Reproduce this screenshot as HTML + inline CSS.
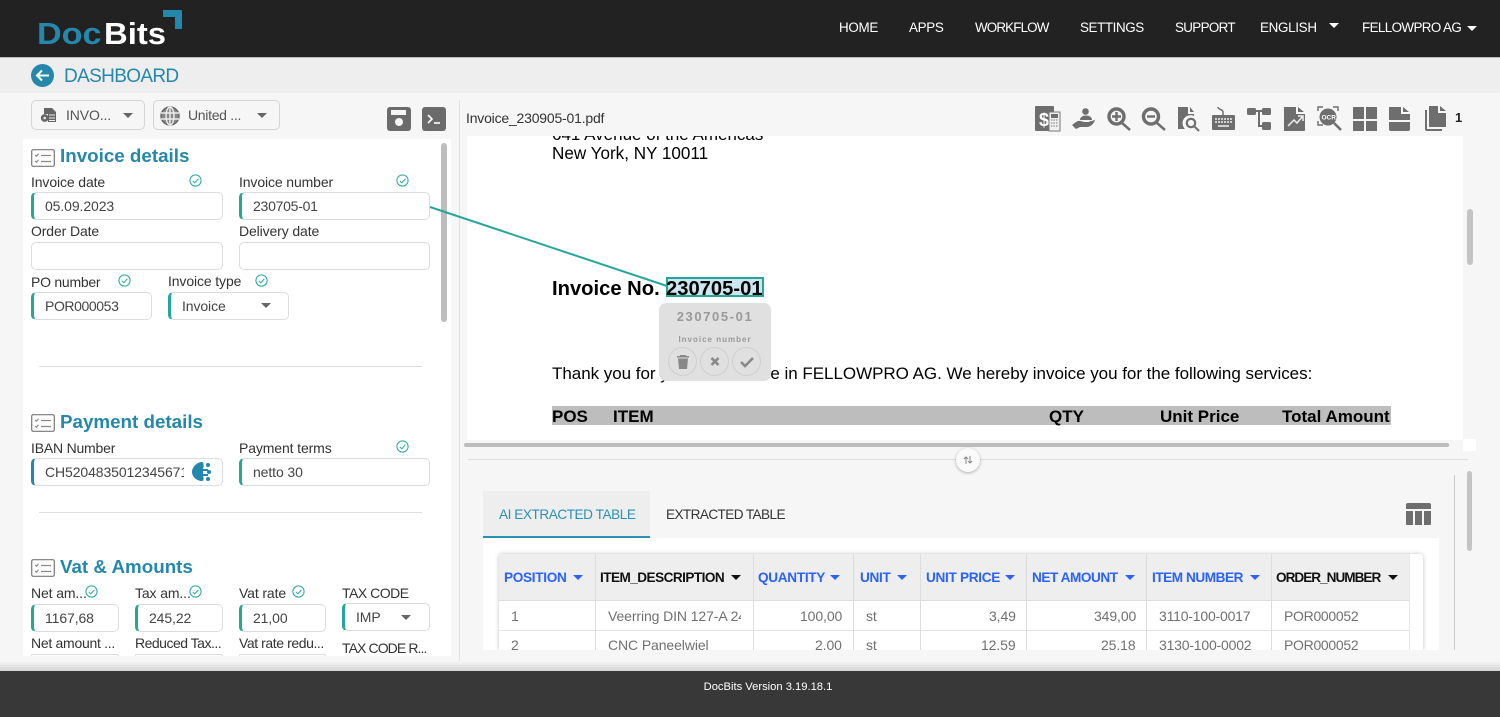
<!DOCTYPE html>
<html lang="en"><head><meta charset="utf-8"><title>DocBits</title>
<style>
*{box-sizing:border-box}
html,body{margin:0;padding:0;width:1500px;height:717px;overflow:hidden;background:#f6f6f6;font-family:"Liberation Sans",sans-serif;color:#333}
.a{position:absolute}
.t{position:absolute;white-space:nowrap;line-height:16px;font-size:14px;letter-spacing:-.12px}
.nav{color:#fff;font-size:13.4px;letter-spacing:-.3px;top:20px}
.lb{color:#333}
.in{position:absolute;background:#fff;border:1px solid #dcdcdc;border-left:3px solid #26a69a;border-radius:5px;height:28px;font-size:14px;line-height:26px;padding-left:11px;color:#444;white-space:nowrap;overflow:hidden;letter-spacing:-.1px}
.h{position:absolute;font-size:18.8px;font-weight:bold;color:#2488ad;line-height:24px;white-space:nowrap}
.hr{position:absolute;height:1px;background:#ddd}
.car{position:absolute;width:0;height:0;border-left:5px solid transparent;border-right:5px solid transparent;border-top:5px solid #666}
.doc{position:absolute;white-space:nowrap;color:#000;line-height:20px}
.th{position:absolute;top:570px;font-size:13.6px;font-weight:bold;letter-spacing:-.3px;line-height:16px;white-space:nowrap;color:#2962ff}
.td{position:absolute;font-size:14px;line-height:16px;color:#707070;white-space:nowrap;letter-spacing:-.1px}
.vl{position:absolute;top:554px;width:1px;height:96px;background:#ddd}
.cb{position:absolute;top:347px;width:29px;height:29px;border:1px solid #cfcfcf;border-radius:50%}
</style></head><body>

<header class="a" style="left:0;top:0;width:1500px;height:57px;background:#222"></header>
<div class="a" style="left:0;top:57px;width:1500px;height:1px;background:#bbb"></div>
<div class="a" style="left:0;top:58px;width:1500px;height:35px;background:#eee"></div>

<div class="a" style="left:37px;top:16px;font-size:31px;font-weight:bold;line-height:36px;color:#2488ad;white-space:nowrap;transform-origin:0 0;transform:scaleX(1.100)">Doc</div>
<div class="a" style="left:104px;top:16px;font-size:31px;font-weight:bold;line-height:36px;color:#fff;white-space:nowrap;transform-origin:0 0;transform:scaleX(1.060)">Bits</div>
<svg class="a" style="left:160px;top:8px" width="24" height="26"><path d="M3 2H21a1 1 0 0 1 1 1V21H15V9H3Z" fill="#2488ad"/></svg>

<span class="t nav" style="left:839px">HOME</span>
<span class="t nav" style="left:909px">APPS</span>
<span class="t nav" style="left:975px;letter-spacing:-.85px">WORKFLOW</span>
<span class="t nav" style="left:1080px;letter-spacing:-.4px">SETTINGS</span>
<span class="t nav" style="left:1175px;letter-spacing:-.65px">SUPPORT</span>
<span class="t nav" style="left:1260px">ENGLISH</span>
<span class="t nav" style="left:1362px;letter-spacing:-.6px">FELLOWPRO AG</span>
<div class="car" style="left:1329px;top:23px;border-top-color:#fff"></div>
<div class="car" style="left:1467px;top:26px;border-top-color:#fff"></div>

<svg class="a" style="left:31px;top:64px" width="23" height="23"><circle cx="11.5" cy="11.5" r="11.5" fill="#2488ad"/><path d="M18 11.5H6M11 6.5L6 11.5L11 16.5" fill="none" stroke="#fff" stroke-width="2"/></svg>
<span class="t" style="left:64px;top:67px;font-size:19px;line-height:20px;color:#2488ad;letter-spacing:-.65px">DASHBOARD</span>

<!-- selects -->
<div class="a" style="left:31px;top:100px;width:114px;height:30px;border:1px solid #d5d5d5;border-radius:5px"></div>
<div class="a" style="left:153px;top:100px;width:127px;height:30px;border:1px solid #d5d5d5;border-radius:5px"></div>
<svg class="a" style="left:40px;top:106px" width="18" height="20" fill="#666"><path d="M4 2H12L16 6V16H8V8H4Z"/><path d="M9 9h6M9 12h6M9 14.500h6" stroke="#eee" stroke-width="1"/><circle cx="4.700" cy="12" r="3.900"/><circle cx="4.700" cy="12" r="1.300" fill="#eee"/></svg>
<span class="t" style="left:66px;top:107px;color:#555">INVO...</span>
<div class="car" style="left:123px;top:113px"></div>
<svg class="a" style="left:160px;top:106px" width="20" height="20" fill="none" stroke="#666" stroke-width="1.4"><circle cx="10" cy="10" r="9" fill="#888"/><ellipse cx="10" cy="10" rx="4" ry="9" stroke="#eee"/><path d="M1 7H19M1 13H19M10 1V19" stroke="#eee"/></svg>
<span class="t" style="left:188px;top:107px;color:#555;letter-spacing:-.3px">United ...</span>
<div class="car" style="left:257px;top:113px"></div>
<svg class="a" style="left:387px;top:106px" width="24" height="25"><rect y="1" width="24" height="24" rx="3" fill="#6b6b6b"/><rect x="4" y="4" width="15" height="5" fill="#f6f6f6"/><circle cx="12" cy="16" r="4" fill="#f6f6f6"/></svg>
<svg class="a" style="left:422px;top:106px" width="24" height="25"><rect y="1" width="24" height="24" rx="3" fill="#6b6b6b"/><path d="M6 9l4 4-4 4" fill="none" stroke="#fff" stroke-width="1.6"/><path d="M12 17h6" stroke="#fff" stroke-width="1.6"/></svg>

<!-- left card -->
<section class="a" style="left:23px;top:139px;width:428px;height:517px;background:#fff;overflow:hidden">
<div class="a" style="left:418px;top:4px;width:6px;height:179px;background:#bdbdbd;border-radius:3px"></div>
</section>
<div class="a" style="left:459px;top:100px;width:1px;height:570px;background:#e2e2e2"></div>

<svg width="0" height="0" style="position:absolute"><defs>
<symbol id="chk" viewBox="0 0 13 13"><circle cx="6.5" cy="6.5" r="5.6" fill="none" stroke="#26a69a" stroke-width="1"/><path d="M3.8 6.8l2 2 3.6-4" fill="none" stroke="#26a69a" stroke-width="1"/></symbol>
<symbol id="lst" viewBox="0 0 24 18"><rect x=".7" y=".7" width="22.6" height="16.6" rx="1.5" fill="none" stroke="#777" stroke-width="1.2"/><path d="M4 6l1.500 1.200 2-2.400M4 12l1.500 1.200 2-2.400M10 6.500h10M10 12.500h10" fill="none" stroke="#888" stroke-width="1.200"/></symbol>
</defs></svg>

<svg class="a" style="left:31px;top:149px" width="24" height="18"><use href="#lst"/></svg>
<div class="h" style="left:60px;top:144px">Invoice details</div>
<span class="t lb" style="left:31px;top:174px">Invoice date</span>
<svg class="a" style="left:189px;top:174px" width="13" height="13"><use href="#chk"/></svg>
<span class="t lb" style="left:239px;top:174px">Invoice number</span>
<svg class="a" style="left:396px;top:174px" width="13" height="13"><use href="#chk"/></svg>
<div class="in" style="left:31px;top:192px;width:192px">05.09.2023</div>
<div class="in" style="left:239px;top:192px;width:191px;letter-spacing:-.25px">230705-01</div>
<span class="t lb" style="left:31px;top:223px">Order Date</span>
<span class="t lb" style="left:239px;top:223px">Delivery date</span>
<div class="in" style="left:31px;top:242px;width:192px;border-left:1px solid #dcdcdc"></div>
<div class="in" style="left:239px;top:242px;width:191px;border-left:1px solid #dcdcdc"></div>
<span class="t lb" style="left:31px;top:274px;letter-spacing:-.25px">PO number</span>
<svg class="a" style="left:118px;top:274px" width="13" height="13"><use href="#chk"/></svg>
<span class="t lb" style="left:168px;top:273px">Invoice type</span>
<svg class="a" style="left:255px;top:274px" width="13" height="13"><use href="#chk"/></svg>
<div class="in" style="left:31px;top:292px;width:121px;letter-spacing:-.4px">POR000053</div>
<div class="in" style="left:168px;top:292px;width:121px">Invoice</div>
<div class="car" style="left:261px;top:303px"></div>
<div class="hr" style="left:39px;top:366px;width:383px"></div>

<svg class="a" style="left:31px;top:414px" width="24" height="18"><use href="#lst"/></svg>
<div class="h" style="left:60px;top:410px">Payment details</div>
<span class="t lb" style="left:31px;top:440px;letter-spacing:-.2px">IBAN Number</span>
<span class="t lb" style="left:239px;top:440px">Payment terms</span>
<svg class="a" style="left:396px;top:440px" width="13" height="13"><use href="#chk"/></svg>
<div class="in" style="left:31px;top:458px;width:192px;border-left-color:#2488ad"><span style="display:inline-block;width:139px;overflow:hidden">CH5204835012345671</span></div>
<svg class="a" style="left:191px;top:460px" width="21" height="23"><path d="M11 2C6 2 1 7 1 12s5 9 10 9c2 0 2-3 1-5h5v-2h-5v-3h5V9h-5c1-2 1-7-1-7z" fill="#2488ad"/><circle cx="17" cy="5" r="2" fill="#2488ad"/><circle cx="18" cy="12" r="2" fill="#2488ad"/><circle cx="17" cy="19" r="2" fill="#2488ad"/></svg>
<div class="in" style="left:239px;top:458px;width:191px">netto 30</div>
<div class="hr" style="left:39px;top:512px;width:383px"></div>

<svg class="a" style="left:31px;top:559px" width="24" height="18"><use href="#lst"/></svg>
<div class="h" style="left:60px;top:555px">Vat &amp; Amounts</div>
<span class="t lb" style="left:31px;top:585px">Net am...</span>
<svg class="a" style="left:85px;top:585px" width="13" height="13"><use href="#chk"/></svg>
<span class="t lb" style="left:135px;top:585px">Tax am...</span>
<svg class="a" style="left:189px;top:585px" width="13" height="13"><use href="#chk"/></svg>
<span class="t lb" style="left:239px;top:585px">Vat rate</span>
<svg class="a" style="left:292px;top:585px" width="13" height="13"><use href="#chk"/></svg>
<span class="t lb" style="left:342px;top:585px;letter-spacing:-.5px">TAX CODE</span>
<div class="in" style="left:31px;top:604px;width:88px">1167,68</div>
<div class="in" style="left:135px;top:604px;width:88px">245,22</div>
<div class="in" style="left:239px;top:604px;width:87px">21,00</div>
<div class="in" style="left:342px;top:603px;width:88px">IMP</div>
<div class="car" style="left:401px;top:615px"></div>
<span class="t lb" style="left:31px;top:635px;letter-spacing:-.28px">Net amount ...</span>
<span class="t lb" style="left:135px;top:635px;letter-spacing:-.5px">Reduced Tax...</span>
<span class="t lb" style="left:239px;top:635px;letter-spacing:-.42px">Vat rate redu...</span>
<span class="t lb" style="left:342px;top:640px;letter-spacing:-.9px">TAX CODE R...</span>
<div class="a" style="left:31px;top:654px;width:88px;height:2px;border:1px solid #dcdcdc;border-bottom:0;border-radius:4px 4px 0 0"></div>
<div class="a" style="left:135px;top:654px;width:88px;height:2px;border:1px solid #dcdcdc;border-bottom:0;border-radius:4px 4px 0 0"></div>
<div class="a" style="left:239px;top:654px;width:87px;height:2px;border:1px solid #dcdcdc;border-bottom:0;border-radius:4px 4px 0 0"></div>

<!-- doc toolbar -->
<span class="t" style="left:466px;top:110px;color:#333;letter-spacing:-.2px">Invoice_230905-01.pdf</span>
<svg class="a" style="left:0;top:0" width="1500" height="140" fill="#6e6e6e">
<rect x="1035" y="106" width="19" height="25" rx="1"/><text x="1039" y="126" font-family="Liberation Sans" font-size="18" font-weight="bold" fill="#fff">$</text>
<rect x="1049" y="112" width="11" height="19" fill="#f0f0f0" stroke="#777"/><rect x="1051" y="114" width="7" height="4"/><path d="M1051 120h7M1051 123h7M1051 126h7" stroke="#777" stroke-dasharray="1.500 1"/>
<circle cx="1085.500" cy="111.500" r="3.300"/><path d="M1080 120c0-6 12-6 12 0Z"/><path d="M1072 125l4-3c3-2 5-1 8 0h4l7-2c-1 4-5 7-8 7h-7l-4 2Z"/>
<g fill="none" stroke="#6e6e6e"><circle cx="1116.500" cy="116.500" r="7.500" stroke-width="3.400"/><path d="M1122 123l8 7" stroke-width="2.500"/><path d="M1112 116.500h9M1116.500 112v9" stroke-width="2.400"/><circle cx="1151" cy="116.500" r="7.500" stroke-width="3.400"/><path d="M1157 123l8 7" stroke-width="2.500"/><path d="M1147 116.500h8" stroke-width="2.400"/></g>
<path d="M1178 107h10v7h6v2a8 8 0 0 0-9 13h-7Z"/><path d="M1190 107l4 5h-4Z"/><circle cx="1191" cy="123" r="4.200" fill="none" stroke="#6e6e6e" stroke-width="2.200"/><path d="M1194 126l5 5" stroke="#6e6e6e" stroke-width="2"/>
<path d="M1218 107c0 3 5 2 5 5v3" fill="none" stroke="#6e6e6e" stroke-width="1.500"/><rect x="1212" y="115" width="23" height="15" rx="1"/><path d="M1215 119h17M1215 122h17" stroke="#f0f0f0" stroke-width="1.500" stroke-dasharray="2 1"/><path d="M1218 126h11" stroke="#f0f0f0" stroke-width="1.500"/>
<rect x="1247" y="108" width="9" height="7" rx="1.500"/><rect x="1262" y="108" width="9" height="7" rx="1.500"/><rect x="1262" y="122" width="9" height="8" rx="1.500"/><path d="M1255 111h8M1259 111v15h4" fill="none" stroke="#6e6e6e" stroke-width="2"/>
<path d="M1284 107h12v7h9v16a1 1 0 0 1-1 1h-20Z"/><path d="M1298 107l6 5h-6Z"/><path d="M1288 126l6-6 3 3 5-6M1298 116h5v5" fill="none" stroke="#f0f0f0" stroke-width="1.500"/>
<path d="M1318 111v-4h5M1333 107h5v4M1318 121v4h5" fill="none" stroke="#6e6e6e" stroke-width="1.500"/><circle cx="1328" cy="117" r="8.500"/><text x="1321.500" y="119.500" font-family="Liberation Sans" font-size="6.500" font-weight="bold" fill="#fff">OCR</text><path d="M1334 123l7 7" stroke="#6e6e6e" stroke-width="2.500"/>
<rect x="1353" y="107" width="11" height="12"/><rect x="1366" y="107" width="11" height="12"/><rect x="1353" y="121" width="11" height="10"/><rect x="1366" y="121" width="11" height="10"/>
<path d="M1389 107h12v7h9v6h-21Z"/><path d="M1403 107l6 5h-6Z"/><path d="M1389 122h21v7a2 2 0 0 1-2 2h-17a2 2 0 0 1-2-2Z"/>
<path d="M1429 106h9v7h8v14h-17Z"/><path d="M1440 106l6 5h-6Z"/><path d="M1425 110h2v19h15v2h-15a2 2 0 0 1-2-2Z"/>
</svg>
<span class="t" style="left:1455px;top:110px;font-size:13px;font-weight:bold;color:#222">1</span>

<!-- document -->
<main class="a" style="left:467px;top:136px;width:996px;height:304px;background:#fff;overflow:hidden">
<div class="doc" style="left:85px;top:-11px;font-size:17px">641 Avenue of the Americas</div>
<div class="doc" style="left:85px;top:8px;font-size:17.100px">New York, NY 10011</div>
<div class="doc" style="left:85px;top:143px;font-size:20.200px;font-weight:bold">Invoice No.</div>
<div class="a" style="left:199px;top:141px;width:98px;height:20px;background:#cce6ef;border:2px solid #26a69a"></div>
<div class="doc" style="left:199px;top:143px;font-size:20.200px;font-weight:bold">230705-01</div>
<div class="doc" style="left:85px;top:228px;font-size:17px;letter-spacing:-.03px">Thank you for your confidence in FELLOWPRO AG. We hereby invoice you for the following services:</div>
<div class="a" style="left:85px;top:270px;width:839px;height:19px;background:#bdbdbd"></div>
<div class="doc" style="left:85px;top:271px;font-size:17px;font-weight:bold">POS</div>
<div class="doc" style="left:146px;top:271px;font-size:17px;font-weight:bold">ITEM</div>
<div class="doc" style="left:582px;top:271px;font-size:17px;font-weight:bold">QTY</div>
<div class="doc" style="left:693px;top:271px;font-size:17px;font-weight:bold">Unit Price</div>
<div class="doc" style="left:815px;top:271px;font-size:17px;font-weight:bold">Total Amount</div>
</main>
<svg class="a" style="left:0;top:0;pointer-events:none" width="1500" height="300"><path d="M430 207L667 286" stroke="#26a69a" stroke-width="2"/></svg>

<!-- popup -->
<div class="a" style="left:659px;top:303px;width:112px;height:78px;background:#e0e0e0;border-radius:7px"></div>
<div class="a" style="left:659px;top:309px;width:112px;text-align:center;font-size:13px;line-height:16px;font-weight:bold;letter-spacing:1.600px;color:#999">230705-01</div>
<div class="a" style="left:659px;top:334px;width:112px;text-align:center;font-size:8px;line-height:11px;font-weight:bold;letter-spacing:1px;color:#999">Invoice number</div>
<div class="cb" style="left:668px"></div><div class="cb" style="left:700px"></div><div class="cb" style="left:732px"></div>
<svg class="a" style="left:668px;top:347px" width="94" height="29"><path d="M9 9h12v1.500H9ZM12 8h6v1h-6ZM10 11.500h10l-1 10.500h-8Z" fill="#888"/><path d="M43.500 11l7 7M50.500 11l-7 7" stroke="#888" stroke-width="2.600"/><path d="M73 15l4 4 8-8" fill="none" stroke="#888" stroke-width="2.600"/></svg>

<!-- split -->
<div class="a" style="left:464px;top:443px;width:985px;height:4px;background:#bdbdbd;border-radius:2px"></div>
<div class="a" style="left:1463px;top:439px;width:13px;height:12px;background:#fff"></div>
<div class="a" style="left:1467px;top:209px;width:6px;height:56px;background:#c4c4c4;border-radius:3px"></div>
<div class="hr" style="left:468px;top:459px;width:1000px;background:#e0e0e0"></div>
<div class="a" style="left:956px;top:448px;width:24px;height:24px;border-radius:50%;background:#fafafa;box-shadow:0 1px 3px rgba(0,0,0,.3)"></div>
<svg class="a" style="left:963px;top:455px" width="10" height="10" fill="none" stroke="#888"><path d="M3 9V2M1 4l2-2 2 2M7 1v7M5 6l2 2 2-2"/></svg>

<!-- tabs -->
<div class="a" style="left:483px;top:538px;width:956px;height:112px;background:#fff"></div>
<div class="a" style="left:483px;top:491px;width:167px;height:47px;background:#eee;border-bottom:2px solid #2a90b5"></div>
<span class="t" style="left:499px;top:507px;color:#2a90b5;font-size:13.600px;letter-spacing:-.45px">AI EXTRACTED TABLE</span>
<span class="t" style="left:666px;top:507px;color:#333;font-size:13.600px;letter-spacing:-.6px">EXTRACTED TABLE</span>
<svg class="a" style="left:1406px;top:503px" width="25" height="23" fill="#6e6e6e"><path d="M2 0H23a2 2 0 0 1 2 2V6H0V2a2 2 0 0 1 2-2Z"/><path d="M0 8h7v14H1a1 1 0 0 1-1-1Z"/><rect x="9" y="8" width="7" height="14"/><path d="M18 8h7v13a1 1 0 0 1-1 1h-6Z"/></svg>

<!-- table -->
<div class="a" style="left:499px;top:554px;width:924px;height:96px;box-shadow:0 0 4px rgba(0,0,0,.25);background:#fff;border-radius:3px 3px 0 0;clip-path:inset(-6px -6px 0 -6px)"></div>
<div class="a" style="left:499px;top:554px;width:910px;height:47px;background:#eee;border-bottom:1px solid #ddd"></div>
<div class="a" style="left:499px;top:630px;width:910px;height:1px;background:#e4e4e4"></div>
<div class="vl" style="left:595px"></div><div class="vl" style="left:753px"></div><div class="vl" style="left:853px"></div><div class="vl" style="left:920px"></div><div class="vl" style="left:1026px"></div><div class="vl" style="left:1146px"></div><div class="vl" style="left:1271px"></div><div class="vl" style="left:1409px;background:#e8e8e8"></div>

<span class="th" style="left:504px">POSITION</span><div class="car" style="left:573px;top:575px;border-top-color:#2962ff"></div>
<span class="th" style="left:600px;color:#111;letter-spacing:-.55px">ITEM_DESCRIPTION</span><div class="car" style="left:731px;top:575px;border-top-color:#111"></div>
<span class="th" style="left:758px">QUANTITY</span><div class="car" style="left:830px;top:575px;border-top-color:#2962ff"></div>
<span class="th" style="left:860px">UNIT</span><div class="car" style="left:897px;top:575px;border-top-color:#2962ff"></div>
<span class="th" style="left:926px">UNIT PRICE</span><div class="car" style="left:1005px;top:575px;border-top-color:#2962ff"></div>
<span class="th" style="left:1032px;letter-spacing:-.45px">NET AMOUNT</span><div class="car" style="left:1125px;top:575px;border-top-color:#2962ff"></div>
<span class="th" style="left:1152px;letter-spacing:-.45px">ITEM NUMBER</span><div class="car" style="left:1250px;top:575px;border-top-color:#2962ff"></div>
<span class="th" style="left:1276px;color:#111;letter-spacing:-1px">ORDER_NUMBER</span><div class="car" style="left:1388px;top:575px;border-top-color:#111"></div>

<span class="td" style="left:511px;top:608px">1</span>
<span class="td" style="left:608px;top:608px;width:133px;overflow:hidden">Veerring DIN 127-A 24</span>
<span class="td" style="left:800px;top:608px">100,00</span>
<span class="td" style="left:866px;top:608px">st</span>
<span class="td" style="left:989px;top:608px">3,49</span>
<span class="td" style="left:1094px;top:608px">349,00</span>
<span class="td" style="left:1159px;top:608px;letter-spacing:-.2px">3110-100-0017</span>
<span class="td" style="left:1284px;top:608px;letter-spacing:-.3px">POR000052</span>
<div class="a" style="left:499px;top:631px;width:924px;height:19px;overflow:hidden">
<span class="td" style="left:12px;top:6px">2</span>
<span class="td" style="left:109px;top:6px">CNC Paneelwiel</span>
<span class="td" style="left:316px;top:6px">2.00</span>
<span class="td" style="left:367px;top:6px">st</span>
<span class="td" style="left:482px;top:6px">12.59</span>
<span class="td" style="left:602px;top:6px">25.18</span>
<span class="td" style="left:660px;top:6px;letter-spacing:-.2px">3130-100-0002</span>
<span class="td" style="left:785px;top:6px;letter-spacing:-.3px">POR000052</span>
</div>
<div class="a" style="left:1454px;top:475px;width:1px;height:175px;background:#ccc"></div>
<div class="a" style="left:1467px;top:471px;width:5px;height:80px;background:#c4c4c4;border-radius:3px"></div>

<!-- footer -->
<div class="a" style="left:0;top:661px;width:1500px;height:10px;background:linear-gradient(#f6f6f6,#d4d4d4)"></div>
<footer class="a" style="left:0;top:671px;width:1500px;height:46px;background:#383838;color:#fff;font-size:11.200px;line-height:32px;text-align:center;padding-left:36px">DocBits Version 3.19.18.1</footer>
</body></html>
